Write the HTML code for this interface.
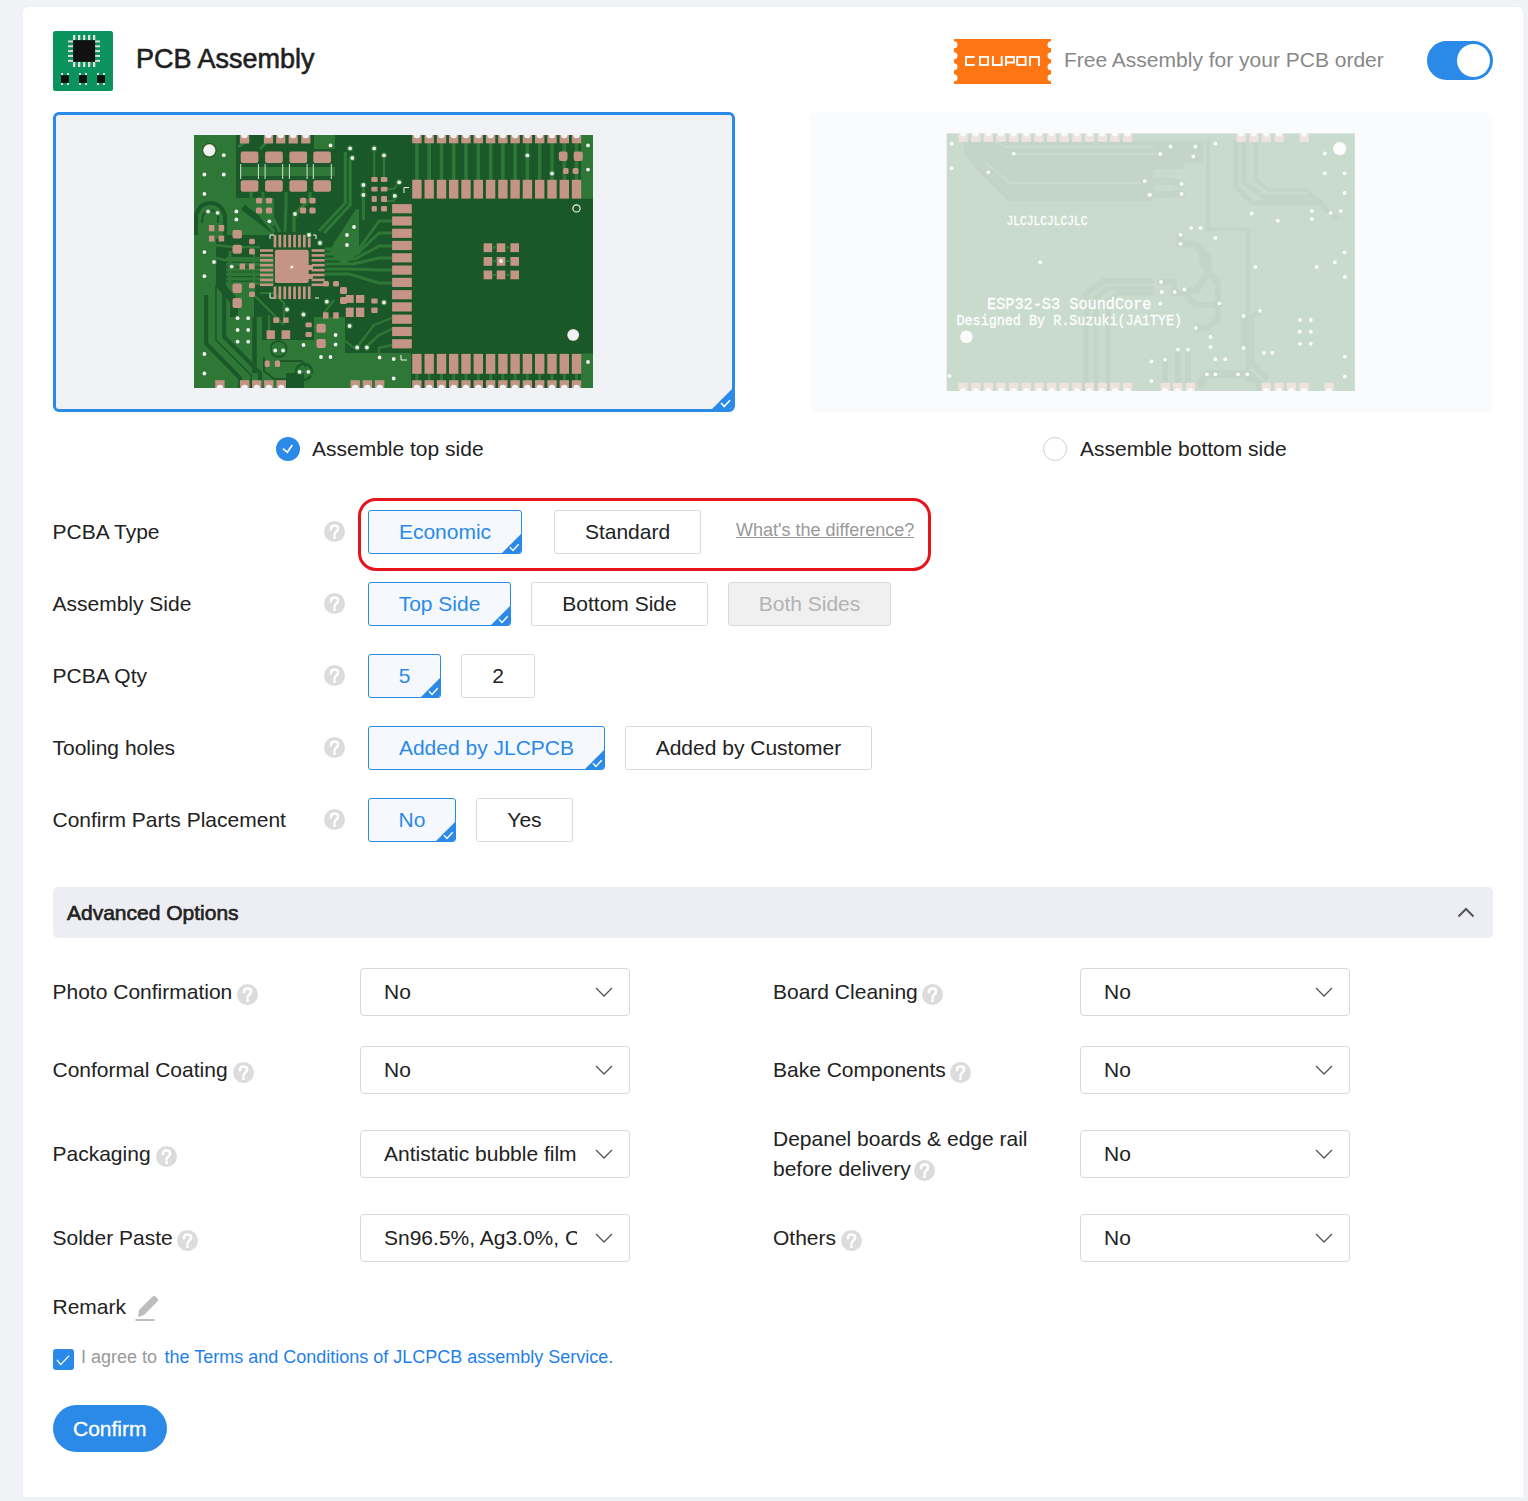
<!DOCTYPE html>
<html><head><meta charset="utf-8">
<style>
html,body{margin:0;padding:0}
body{width:1528px;height:1501px;overflow:hidden;background:#f0f2f5;position:relative;font-family:"Liberation Sans",sans-serif;color:#222}
.card{position:absolute;left:23px;top:7px;width:1500px;height:1490px;background:#fff;border-radius:6px 6px 0 0}
.a{position:absolute}
.t{position:absolute;white-space:nowrap;line-height:normal;font-size:21px}
.btn{position:absolute;box-sizing:border-box;border:1px solid #d9d9d9;border-radius:3px;background:#fff;font-size:21px;color:#222;text-align:center;white-space:nowrap;overflow:hidden}
.btn span{position:absolute;left:0;right:0;top:9px;line-height:normal}
.sel{border-color:#2b8ae8;background:#f5f9fe;color:#2b8ae8}
.sel svg{position:absolute;right:-1px;bottom:-1px}
.dis{background:#f0f0f0;color:#b3b3b3;border-color:#dadada}
.q{position:absolute;width:21px;height:21px}.q svg{display:block}
.sl{position:absolute;box-sizing:border-box;width:270px;height:48px;border:1px solid #d9d9d9;border-radius:4px;background:#fff;overflow:hidden}
.sl span{position:absolute;left:23px;top:11px;font-size:21px;line-height:normal;white-space:nowrap;width:193px;overflow:hidden}
.sl svg{position:absolute;left:234px;top:18px}
</style></head><body>
<div class="card"></div>

<!-- header -->
<svg class="a" style="left:53px;top:31px" width="60" height="60" viewBox="0 0 60 60">
 <rect x="0" y="0" width="60" height="60" rx="2.5" fill="#0a935c"/>
 <g fill="#e2dede">
  <rect x="20" y="4" width="2.3" height="5"/><rect x="25" y="4" width="2.3" height="5"/><rect x="30" y="4" width="2.3" height="5"/><rect x="35" y="4" width="2.3" height="5"/><rect x="40" y="4" width="2.3" height="5"/>
  <rect x="20" y="31" width="2.3" height="5"/><rect x="25" y="31" width="2.3" height="5"/><rect x="30" y="31" width="2.3" height="5"/><rect x="35" y="31" width="2.3" height="5"/><rect x="40" y="31" width="2.3" height="5"/>
  <rect x="15" y="9.5" width="5" height="1.9"/><rect x="15" y="14.3" width="5" height="1.9"/><rect x="15" y="19.1" width="5" height="1.9"/><rect x="15" y="24" width="5" height="1.9"/><rect x="15" y="28.9" width="5" height="1.9"/>
  <rect x="42" y="9.5" width="5" height="1.9"/><rect x="42" y="14.3" width="5" height="1.9"/><rect x="42" y="19.1" width="5" height="1.9"/><rect x="42" y="24" width="5" height="1.9"/><rect x="42" y="28.9" width="5" height="1.9"/>
  <rect x="8" y="42" width="2" height="2"/><rect x="14" y="42" width="2" height="2"/><rect x="8" y="52" width="2" height="2"/><rect x="14" y="52" width="2" height="2"/>
  <rect x="26" y="42" width="2" height="2"/><rect x="32" y="42" width="2" height="2"/><rect x="26" y="52" width="2" height="2"/><rect x="32" y="52" width="2" height="2"/>
  <rect x="44" y="42" width="2" height="2"/><rect x="50" y="42" width="2" height="2"/><rect x="44" y="52" width="2" height="2"/><rect x="50" y="52" width="2" height="2"/>
 </g>
 <rect x="20.2" y="9.2" width="21.9" height="21.6" fill="#111"/>
 <rect x="8" y="44.2" width="7.8" height="7.7" fill="#111"/>
 <rect x="26.1" y="44.2" width="7.8" height="7.7" fill="#111"/>
 <rect x="44.2" y="44.2" width="7.8" height="7.7" fill="#111"/>
</svg>
<div class="t" style="left:136px;top:44px;font-size:27px;color:#1f1f1f;-webkit-text-stroke:0.6px #1f1f1f">PCB Assembly</div>

<!-- coupon -->
<svg class="a" style="left:954px;top:39px" width="97" height="45" viewBox="0 0 97 45">
 <path fill="#ff7513" d="M0 0H97V2.2A3.5 3.5 0 0 0 97 9.2V13.2A3.5 3.5 0 0 0 97 20.2V24.2A3.5 3.5 0 0 0 97 31.2V35.2A3.5 3.5 0 0 0 97 42.2V45H0V42.2A3.5 3.5 0 0 0 0 35.2V31.2A3.5 3.5 0 0 0 0 24.2V20.2A3.5 3.5 0 0 0 0 13.2V9.2A3.5 3.5 0 0 0 0 2.2Z"/>
 <g fill="none" stroke="#fff" stroke-width="1.9">
  <path d="M20.7 18H12V26H20.7"/>
  <rect x="25.9" y="18" width="8.2" height="8"/>
  <path d="M38.9 17V26H47.7V17"/>
  <path d="M52 27V18H60V23.5H52"/>
  <rect x="63.2" y="18" width="8.4" height="8"/>
  <path d="M76 27V18H84.9V27"/>
 </g>
</svg>
<div class="t" style="left:1064px;top:48px;color:#888">Free Assembly for your PCB order</div>
<div class="a" style="left:1427px;top:41px;width:66px;height:39px;border-radius:20px;background:#2b8ae8"></div>
<div class="a" style="left:1457px;top:44px;width:33px;height:33px;border-radius:50%;background:#fff"></div>

<!-- image boxes -->
<div class="a" style="left:53px;top:112px;width:682px;height:300px;box-sizing:border-box;border:3px solid #2b8ae8;border-radius:6px;background:#f0f2f5;overflow:hidden">
 <svg class="a" style="right:-3px;bottom:-3px" width="26" height="26"><polygon points="26,0 26,26 0,26" fill="#2b8ae8"/><polyline points="12.1,16.9 15.2,20.6 21,14.3" fill="none" stroke="#fff" stroke-width="1.6"/></svg>
</div>
<div class="a" id="pcbtop" style="left:194px;top:135px;width:399px;height:253px"><svg width="399" height="253" viewBox="0 0 399 253"><rect x="0.0" y="0.0" width="399.0" height="253.0" fill="#2f7736"/><rect x="217.0" y="0.0" width="170.0" height="253.0" fill="#1a5829"/><rect x="387.0" y="63.6" width="12.0" height="155.0" fill="#1a5829"/><rect x="42.0" y="0.0" width="175.0" height="63.0" fill="#1a5829"/><rect x="80.0" y="62.0" width="137.0" height="120.0" fill="#1a5829"/><rect x="60.0" y="150.0" width="20.0" height="32.0" fill="#1a5829"/><rect x="31.0" y="100.0" width="49.0" height="22.0" fill="#1a5829"/><rect x="151.0" y="182.0" width="66.0" height="36.0" fill="#1a5829"/><rect x="68.0" y="182.0" width="52.0" height="23.0" fill="#1a5829"/><rect x="92.0" y="238.0" width="18.0" height="15.0" fill="#1a5829"/><polyline fill="none" stroke="#1a5829" stroke-width="2" stroke-linejoin="round" points="70.0,222.0 70.0,236.0 80.0,244.0 92.0,244.0"/><polyline fill="none" stroke="#1a5829" stroke-width="2" stroke-linejoin="round" points="86.0,226.0 108.0,226.0 112.0,232.0"/><circle cx="84.5" cy="214" r="8" fill="none" stroke="#1a5829" stroke-width="2"/><circle cx="110" cy="236.8" r="8" fill="none" stroke="#1a5829" stroke-width="2.5"/><path d="M2 100 L2 80 Q6 68 16 68 Q24 68 28 74 L31 80 L31 110" fill="none" stroke="#1a5829" stroke-width="4"/><path d="M8 88 Q8 76 16 75 Q22 76 24 80 L24 88" fill="none" stroke="#1a5829" stroke-width="2"/><polyline fill="none" stroke="#1a5829" stroke-width="8" stroke-linejoin="round" points="26.0,104.0 26.0,150.0 40.0,166.0 40.0,182.0"/><polyline fill="none" stroke="#1a5829" stroke-width="6" stroke-linejoin="round" points="49.0,72.0 62.0,82.0 80.0,96.0"/><rect x="31.0" y="122.0" width="35.0" height="28.0" fill="#2f7736"/><polyline fill="none" stroke="#1a5829" stroke-width="1.2" stroke-linejoin="round" points="31.0,127.4 66.0,127.4"/><polyline fill="none" stroke="#1a5829" stroke-width="1.2" stroke-linejoin="round" points="31.0,132.2 66.0,132.2"/><polyline fill="none" stroke="#1a5829" stroke-width="1.2" stroke-linejoin="round" points="31.0,137.0 66.0,137.0"/><polyline fill="none" stroke="#1a5829" stroke-width="1.2" stroke-linejoin="round" points="31.0,141.6 66.0,141.6"/><polyline fill="none" stroke="#1a5829" stroke-width="1.2" stroke-linejoin="round" points="31.0,146.2 66.0,146.2"/><polyline fill="none" stroke="#1a5829" stroke-width="4" stroke-linejoin="round" points="12.2,160.0 12.2,208.7 46.0,243.0 46.0,253.0"/><polyline fill="none" stroke="#1a5829" stroke-width="1.6" stroke-linejoin="round" points="22.0,150.0 22.0,205.0 57.0,240.0 57.0,253.0"/><polyline fill="none" stroke="#1a5829" stroke-width="4" stroke-linejoin="round" points="30.2,110.0 30.2,202.0 66.0,238.0 66.0,253.0"/><polyline fill="none" stroke="#1a5829" stroke-width="4.5" stroke-linejoin="round" points="60.5,182.0 60.5,238.0"/><rect x="120.0" y="0.0" width="21.0" height="14.0" fill="#2f7736"/><rect x="46.0" y="32.0" width="95.0" height="9.0" fill="#2f7736"/><polygon fill="#2f7736" points="162.0,74.0 165.0,74.0 165.0,118.0 150.0,130.0 135.0,118.0 140.0,108.0"/><rect x="387.0" y="0.0" width="12.0" height="63.6" fill="#2f7736"/><rect x="387.0" y="218.5" width="12.0" height="34.5" fill="#2f7736"/><polyline fill="none" stroke="#2f7736" stroke-width="3" stroke-linejoin="round" points="36.0,116.0 36.0,150.0 48.0,165.0 48.0,175.0"/><polyline fill="none" stroke="#2f7736" stroke-width="3.6" stroke-linejoin="round" points="222.9,8.0 222.9,45.0"/><polyline fill="none" stroke="#2f7736" stroke-width="3" stroke-linejoin="round" points="222.9,238.0 222.9,246.0"/><polyline fill="none" stroke="#2f7736" stroke-width="3.6" stroke-linejoin="round" points="235.2,8.0 235.2,45.0"/><polyline fill="none" stroke="#2f7736" stroke-width="3" stroke-linejoin="round" points="235.2,238.0 235.2,246.0"/><polyline fill="none" stroke="#2f7736" stroke-width="3.6" stroke-linejoin="round" points="247.5,8.0 247.5,45.0"/><polyline fill="none" stroke="#2f7736" stroke-width="3" stroke-linejoin="round" points="247.5,238.0 247.5,246.0"/><polyline fill="none" stroke="#2f7736" stroke-width="3.6" stroke-linejoin="round" points="259.7,8.0 259.7,45.0"/><polyline fill="none" stroke="#2f7736" stroke-width="3" stroke-linejoin="round" points="259.7,238.0 259.7,246.0"/><polyline fill="none" stroke="#2f7736" stroke-width="3.6" stroke-linejoin="round" points="272.0,8.0 272.0,45.0"/><polyline fill="none" stroke="#2f7736" stroke-width="3" stroke-linejoin="round" points="272.0,238.0 272.0,246.0"/><polyline fill="none" stroke="#2f7736" stroke-width="3.6" stroke-linejoin="round" points="284.3,8.0 284.3,45.0"/><polyline fill="none" stroke="#2f7736" stroke-width="3" stroke-linejoin="round" points="284.3,238.0 284.3,246.0"/><polyline fill="none" stroke="#2f7736" stroke-width="3.6" stroke-linejoin="round" points="296.6,8.0 296.6,45.0"/><polyline fill="none" stroke="#2f7736" stroke-width="3" stroke-linejoin="round" points="296.6,238.0 296.6,246.0"/><polyline fill="none" stroke="#2f7736" stroke-width="3.6" stroke-linejoin="round" points="308.9,8.0 308.9,45.0"/><polyline fill="none" stroke="#2f7736" stroke-width="3" stroke-linejoin="round" points="308.9,238.0 308.9,246.0"/><polyline fill="none" stroke="#2f7736" stroke-width="3.6" stroke-linejoin="round" points="321.1,8.0 321.1,45.0"/><polyline fill="none" stroke="#2f7736" stroke-width="3" stroke-linejoin="round" points="321.1,238.0 321.1,246.0"/><polyline fill="none" stroke="#2f7736" stroke-width="3.6" stroke-linejoin="round" points="333.4,8.0 333.4,45.0"/><polyline fill="none" stroke="#2f7736" stroke-width="3" stroke-linejoin="round" points="333.4,238.0 333.4,246.0"/><polyline fill="none" stroke="#2f7736" stroke-width="3.6" stroke-linejoin="round" points="345.7,8.0 345.7,45.0"/><polyline fill="none" stroke="#2f7736" stroke-width="3" stroke-linejoin="round" points="345.7,238.0 345.7,246.0"/><polyline fill="none" stroke="#2f7736" stroke-width="3.6" stroke-linejoin="round" points="358.0,8.0 358.0,45.0"/><polyline fill="none" stroke="#2f7736" stroke-width="3" stroke-linejoin="round" points="358.0,238.0 358.0,246.0"/><polyline fill="none" stroke="#2f7736" stroke-width="3.6" stroke-linejoin="round" points="370.3,8.0 370.3,45.0"/><polyline fill="none" stroke="#2f7736" stroke-width="3" stroke-linejoin="round" points="370.3,238.0 370.3,246.0"/><polyline fill="none" stroke="#2f7736" stroke-width="3.6" stroke-linejoin="round" points="382.5,8.0 382.5,45.0"/><polyline fill="none" stroke="#2f7736" stroke-width="3" stroke-linejoin="round" points="382.5,238.0 382.5,246.0"/><polyline fill="none" stroke="#2f7736" stroke-width="3.2" stroke-linejoin="round" points="151.4,17.0 151.4,68.0 125.0,96.0"/><polyline fill="none" stroke="#2f7736" stroke-width="3.2" stroke-linejoin="round" points="156.1,23.0 156.1,70.0 130.0,98.0"/><polyline fill="none" stroke="#2f7736" stroke-width="2.2" stroke-linejoin="round" points="180.2,13.0 180.2,42.0"/><polyline fill="none" stroke="#2f7736" stroke-width="3.5" stroke-linejoin="round" points="57.0,57.0 57.0,68.0 80.0,97.0"/><polyline fill="none" stroke="#2f7736" stroke-width="3" stroke-linejoin="round" points="69.0,57.0 69.0,64.0 86.0,97.0"/><polyline fill="none" stroke="#2f7736" stroke-width="3" stroke-linejoin="round" points="92.0,57.0 92.0,70.0 91.0,97.0"/><polyline fill="none" stroke="#2f7736" stroke-width="3.5" stroke-linejoin="round" points="116.0,57.0 116.0,64.0 100.0,80.0 100.0,97.0"/><polyline fill="none" stroke="#2f7736" stroke-width="3" stroke-linejoin="round" points="44.0,12.0 56.0,4.0"/><polyline fill="none" stroke="#2f7736" stroke-width="3" stroke-linejoin="round" points="66.0,14.0 76.0,4.0"/><polyline fill="none" stroke="#2f7736" stroke-width="2.2" stroke-linejoin="round" points="190.0,20.4 190.0,42.0"/><polyline fill="none" stroke="#2f7736" stroke-width="3" stroke-linejoin="round" points="169.4,50.0 169.4,85.0"/><polyline fill="none" stroke="#2f7736" stroke-width="2" stroke-linejoin="round" points="193.0,54.0 200.0,54.0 205.0,47.0"/><polyline fill="none" stroke="#2f7736" stroke-width="2" stroke-linejoin="round" points="193.0,66.0 200.0,66.0 201.0,61.0"/><polyline fill="none" stroke="#2f7736" stroke-width="3.0" stroke-linejoin="round" points="131.0,114.0 165.0,114.0 185.0,86.0 198.0,86.0"/><polyline fill="none" stroke="#2f7736" stroke-width="3.0" stroke-linejoin="round" points="131.0,119.0 163.0,119.0 185.0,98.0 198.0,98.0"/><polyline fill="none" stroke="#2f7736" stroke-width="3.0" stroke-linejoin="round" points="131.0,124.0 161.0,124.0 185.0,111.0 198.0,111.0"/><polyline fill="none" stroke="#2f7736" stroke-width="3.0" stroke-linejoin="round" points="131.0,129.0 159.0,129.0 185.0,123.0 198.0,123.0"/><polyline fill="none" stroke="#2f7736" stroke-width="3.0" stroke-linejoin="round" points="131.0,134.0 157.0,134.0 185.0,135.0 198.0,135.0"/><polyline fill="none" stroke="#2f7736" stroke-width="3.0" stroke-linejoin="round" points="131.0,139.0 155.0,139.0 185.0,148.0 198.0,148.0"/><polyline fill="none" stroke="#2f7736" stroke-width="2.4" stroke-linejoin="round" points="60.0,118.0 60.0,160.0 90.0,190.0"/><polyline fill="none" stroke="#2f7736" stroke-width="2.2" stroke-linejoin="round" points="66.0,158.0 80.0,158.0 90.0,168.0 90.0,182.0"/><polyline fill="none" stroke="#2f7736" stroke-width="2.4" stroke-linejoin="round" points="75.0,180.0 75.0,225.0"/><polyline fill="none" stroke="#2f7736" stroke-width="2.2" stroke-linejoin="round" points="140.0,165.0 130.0,178.0 130.0,236.0 115.0,240.0"/><polyline fill="none" stroke="#2f7736" stroke-width="2.2" stroke-linejoin="round" points="150.0,182.0 150.0,205.0 160.0,213.0"/><polyline fill="none" stroke="#2f7736" stroke-width="2.4" stroke-linejoin="round" points="172.0,212.0 185.0,200.0 198.0,194.0"/><polyline fill="none" stroke="#2f7736" stroke-width="2.4" stroke-linejoin="round" points="163.0,212.0 180.0,190.0 198.0,183.0"/><polyline fill="none" stroke="#2f7736" stroke-width="2.4" stroke-linejoin="round" points="185.0,222.0 185.0,213.0 198.0,210.0"/><polyline fill="none" stroke="#2f7736" stroke-width="2.4" stroke-linejoin="round" points="4.0,90.0 20.0,110.0 40.0,112.0 66.0,112.0"/><polyline fill="none" stroke="#2f7736" stroke-width="2.4" stroke-linejoin="round" points="4.0,118.0 30.0,125.0 66.0,123.0"/><rect x="218.2" y="0.0" width="9.4" height="8.3" fill="#c49486"/><rect x="218.2" y="245.2" width="9.4" height="8.3" fill="#c49486"/><rect x="218.2" y="44.8" width="9.4" height="18.8" fill="#c49486"/><rect x="218.2" y="218.9" width="9.4" height="19.9" fill="#c49486"/><rect x="230.5" y="0.0" width="9.4" height="8.3" fill="#c49486"/><rect x="230.5" y="245.2" width="9.4" height="8.3" fill="#c49486"/><rect x="230.5" y="44.8" width="9.4" height="18.8" fill="#c49486"/><rect x="230.5" y="218.9" width="9.4" height="19.9" fill="#c49486"/><rect x="242.8" y="0.0" width="9.4" height="8.3" fill="#c49486"/><rect x="242.8" y="245.2" width="9.4" height="8.3" fill="#c49486"/><rect x="242.8" y="44.8" width="9.4" height="18.8" fill="#c49486"/><rect x="242.8" y="218.9" width="9.4" height="19.9" fill="#c49486"/><rect x="255.0" y="0.0" width="9.4" height="8.3" fill="#c49486"/><rect x="255.0" y="245.2" width="9.4" height="8.3" fill="#c49486"/><rect x="255.0" y="44.8" width="9.4" height="18.8" fill="#c49486"/><rect x="255.0" y="218.9" width="9.4" height="19.9" fill="#c49486"/><rect x="267.3" y="0.0" width="9.4" height="8.3" fill="#c49486"/><rect x="267.3" y="245.2" width="9.4" height="8.3" fill="#c49486"/><rect x="267.3" y="44.8" width="9.4" height="18.8" fill="#c49486"/><rect x="267.3" y="218.9" width="9.4" height="19.9" fill="#c49486"/><rect x="279.6" y="0.0" width="9.4" height="8.3" fill="#c49486"/><rect x="279.6" y="245.2" width="9.4" height="8.3" fill="#c49486"/><rect x="279.6" y="44.8" width="9.4" height="18.8" fill="#c49486"/><rect x="279.6" y="218.9" width="9.4" height="19.9" fill="#c49486"/><rect x="291.9" y="0.0" width="9.4" height="8.3" fill="#c49486"/><rect x="291.9" y="245.2" width="9.4" height="8.3" fill="#c49486"/><rect x="291.9" y="44.8" width="9.4" height="18.8" fill="#c49486"/><rect x="291.9" y="218.9" width="9.4" height="19.9" fill="#c49486"/><rect x="304.2" y="0.0" width="9.4" height="8.3" fill="#c49486"/><rect x="304.2" y="245.2" width="9.4" height="8.3" fill="#c49486"/><rect x="304.2" y="44.8" width="9.4" height="18.8" fill="#c49486"/><rect x="304.2" y="218.9" width="9.4" height="19.9" fill="#c49486"/><rect x="316.4" y="0.0" width="9.4" height="8.3" fill="#c49486"/><rect x="316.4" y="245.2" width="9.4" height="8.3" fill="#c49486"/><rect x="316.4" y="44.8" width="9.4" height="18.8" fill="#c49486"/><rect x="316.4" y="218.9" width="9.4" height="19.9" fill="#c49486"/><rect x="328.7" y="0.0" width="9.4" height="8.3" fill="#c49486"/><rect x="328.7" y="245.2" width="9.4" height="8.3" fill="#c49486"/><rect x="328.7" y="44.8" width="9.4" height="18.8" fill="#c49486"/><rect x="328.7" y="218.9" width="9.4" height="19.9" fill="#c49486"/><rect x="341.0" y="0.0" width="9.4" height="8.3" fill="#c49486"/><rect x="341.0" y="245.2" width="9.4" height="8.3" fill="#c49486"/><rect x="341.0" y="44.8" width="9.4" height="18.8" fill="#c49486"/><rect x="341.0" y="218.9" width="9.4" height="19.9" fill="#c49486"/><rect x="353.3" y="0.0" width="9.4" height="8.3" fill="#c49486"/><rect x="353.3" y="245.2" width="9.4" height="8.3" fill="#c49486"/><rect x="353.3" y="44.8" width="9.4" height="18.8" fill="#c49486"/><rect x="353.3" y="218.9" width="9.4" height="19.9" fill="#c49486"/><rect x="365.6" y="0.0" width="9.4" height="8.3" fill="#c49486"/><rect x="365.6" y="245.2" width="9.4" height="8.3" fill="#c49486"/><rect x="365.6" y="44.8" width="9.4" height="18.8" fill="#c49486"/><rect x="365.6" y="218.9" width="9.4" height="19.9" fill="#c49486"/><rect x="377.8" y="0.0" width="9.4" height="8.3" fill="#c49486"/><rect x="377.8" y="245.2" width="9.4" height="8.3" fill="#c49486"/><rect x="377.8" y="44.8" width="9.4" height="18.8" fill="#c49486"/><rect x="377.8" y="218.9" width="9.4" height="19.9" fill="#c49486"/><rect x="45.9" y="0.0" width="9.2" height="8.5" fill="#c49486"/><rect x="69.9" y="0.0" width="9.2" height="8.5" fill="#c49486"/><rect x="82.1" y="0.0" width="9.2" height="8.5" fill="#c49486"/><rect x="94.6" y="0.0" width="9.2" height="8.5" fill="#c49486"/><rect x="107.2" y="0.0" width="9.2" height="8.5" fill="#c49486"/><rect x="21.2" y="245.2" width="9.4" height="8.3" fill="#c49486"/><rect x="45.9" y="245.2" width="9.4" height="8.3" fill="#c49486"/><rect x="58.1" y="245.2" width="9.4" height="8.3" fill="#c49486"/><rect x="70.1" y="245.2" width="9.4" height="8.3" fill="#c49486"/><rect x="82.5" y="245.2" width="9.4" height="8.3" fill="#c49486"/><rect x="156.5" y="245.2" width="9.4" height="8.3" fill="#c49486"/><rect x="168.7" y="245.2" width="9.4" height="8.3" fill="#c49486"/><rect x="180.9" y="245.2" width="9.4" height="8.3" fill="#c49486"/><circle cx="222.9" cy="0.0" r="3.2" fill="#f0f2f5"/><circle cx="222.9" cy="253.0" r="3.2" fill="#f0f2f5"/><circle cx="235.2" cy="0.0" r="3.2" fill="#f0f2f5"/><circle cx="235.2" cy="253.0" r="3.2" fill="#f0f2f5"/><circle cx="247.5" cy="0.0" r="3.2" fill="#f0f2f5"/><circle cx="247.5" cy="253.0" r="3.2" fill="#f0f2f5"/><circle cx="259.7" cy="0.0" r="3.2" fill="#f0f2f5"/><circle cx="259.7" cy="253.0" r="3.2" fill="#f0f2f5"/><circle cx="272.0" cy="0.0" r="3.2" fill="#f0f2f5"/><circle cx="272.0" cy="253.0" r="3.2" fill="#f0f2f5"/><circle cx="284.3" cy="0.0" r="3.2" fill="#f0f2f5"/><circle cx="284.3" cy="253.0" r="3.2" fill="#f0f2f5"/><circle cx="296.6" cy="0.0" r="3.2" fill="#f0f2f5"/><circle cx="296.6" cy="253.0" r="3.2" fill="#f0f2f5"/><circle cx="308.9" cy="0.0" r="3.2" fill="#f0f2f5"/><circle cx="308.9" cy="253.0" r="3.2" fill="#f0f2f5"/><circle cx="321.1" cy="0.0" r="3.2" fill="#f0f2f5"/><circle cx="321.1" cy="253.0" r="3.2" fill="#f0f2f5"/><circle cx="333.4" cy="0.0" r="3.2" fill="#f0f2f5"/><circle cx="333.4" cy="253.0" r="3.2" fill="#f0f2f5"/><circle cx="345.7" cy="0.0" r="3.2" fill="#f0f2f5"/><circle cx="345.7" cy="253.0" r="3.2" fill="#f0f2f5"/><circle cx="358.0" cy="0.0" r="3.2" fill="#f0f2f5"/><circle cx="358.0" cy="253.0" r="3.2" fill="#f0f2f5"/><circle cx="370.3" cy="0.0" r="3.2" fill="#f0f2f5"/><circle cx="370.3" cy="253.0" r="3.2" fill="#f0f2f5"/><circle cx="382.5" cy="0.0" r="3.2" fill="#f0f2f5"/><circle cx="382.5" cy="253.0" r="3.2" fill="#f0f2f5"/><circle cx="50.5" cy="0.0" r="3.2" fill="#f0f2f5"/><circle cx="74.5" cy="0.0" r="3.2" fill="#f0f2f5"/><circle cx="86.7" cy="0.0" r="3.2" fill="#f0f2f5"/><circle cx="99.2" cy="0.0" r="3.2" fill="#f0f2f5"/><circle cx="111.8" cy="0.0" r="3.2" fill="#f0f2f5"/><circle cx="25.9" cy="253.0" r="3.2" fill="#f0f2f5"/><circle cx="50.6" cy="253.0" r="3.2" fill="#f0f2f5"/><circle cx="62.8" cy="253.0" r="3.2" fill="#f0f2f5"/><circle cx="74.8" cy="253.0" r="3.2" fill="#f0f2f5"/><circle cx="87.2" cy="253.0" r="3.2" fill="#f0f2f5"/><circle cx="161.2" cy="253.0" r="3.2" fill="#f0f2f5"/><circle cx="173.4" cy="253.0" r="3.2" fill="#f0f2f5"/><circle cx="185.6" cy="253.0" r="3.2" fill="#f0f2f5"/><rect x="198.1" y="69.1" width="19.7" height="9.2" fill="#c49486"/><rect x="198.1" y="81.4" width="19.7" height="9.2" fill="#c49486"/><rect x="198.1" y="93.7" width="19.7" height="9.2" fill="#c49486"/><rect x="198.1" y="105.9" width="19.7" height="9.2" fill="#c49486"/><rect x="198.1" y="118.2" width="19.7" height="9.2" fill="#c49486"/><rect x="198.1" y="130.5" width="19.7" height="9.2" fill="#c49486"/><rect x="198.1" y="142.8" width="19.7" height="9.2" fill="#c49486"/><rect x="198.1" y="155.1" width="19.7" height="9.2" fill="#c49486"/><rect x="198.1" y="167.3" width="19.7" height="9.2" fill="#c49486"/><rect x="198.1" y="179.6" width="19.7" height="9.2" fill="#c49486"/><rect x="198.1" y="191.9" width="19.7" height="9.2" fill="#c49486"/><rect x="198.1" y="204.2" width="19.7" height="9.2" fill="#c49486"/><rect x="289.6" y="108.3" width="8.6" height="8.8" fill="#c49486"/><rect x="289.6" y="122.0" width="8.6" height="8.8" fill="#c49486"/><rect x="289.6" y="135.5" width="8.6" height="8.8" fill="#c49486"/><rect x="302.7" y="108.3" width="8.6" height="8.8" fill="#c49486"/><rect x="302.7" y="122.0" width="8.6" height="8.8" fill="#c49486"/><rect x="302.7" y="135.5" width="8.6" height="8.8" fill="#c49486"/><rect x="316.4" y="108.3" width="8.6" height="8.8" fill="#c49486"/><rect x="316.4" y="122.0" width="8.6" height="8.8" fill="#c49486"/><rect x="316.4" y="135.5" width="8.6" height="8.8" fill="#c49486"/><polyline fill="none" stroke="#2f7736" stroke-width="2" stroke-linejoin="round" points="298.0,112.5 302.7,112.5"/><polyline fill="none" stroke="#2f7736" stroke-width="2" stroke-linejoin="round" points="311.6,112.5 316.4,112.5"/><polyline fill="none" stroke="#2f7736" stroke-width="2" stroke-linejoin="round" points="298.0,126.0 302.7,126.0"/><polyline fill="none" stroke="#2f7736" stroke-width="2" stroke-linejoin="round" points="311.6,126.0 316.4,126.0"/><polyline fill="none" stroke="#2f7736" stroke-width="2" stroke-linejoin="round" points="298.0,140.0 302.7,140.0"/><polyline fill="none" stroke="#2f7736" stroke-width="2" stroke-linejoin="round" points="311.6,140.0 316.4,140.0"/><circle cx="307.0" cy="126.0" r="1.9" fill="#f2f2f2"/><rect x="364.8" y="16.5" width="8.7" height="9.4" fill="#c49486" rx="2"/><rect x="379.7" y="16.5" width="9.1" height="9.4" fill="#c49486" rx="2"/><rect x="369.1" y="33.0" width="5.5" height="5.9" fill="#c49486" rx="1.5"/><rect x="378.6" y="33.0" width="5.9" height="5.9" fill="#c49486" rx="1.5"/><rect x="46.7" y="16.5" width="17.7" height="11.4" fill="#c49486" rx="2"/><rect x="46.7" y="45.2" width="17.7" height="11.5" fill="#c49486" rx="2"/><rect x="71.1" y="16.5" width="17.7" height="11.4" fill="#c49486" rx="2"/><rect x="71.1" y="45.2" width="17.7" height="11.5" fill="#c49486" rx="2"/><rect x="95.4" y="16.5" width="17.7" height="11.4" fill="#c49486" rx="2"/><rect x="95.4" y="45.2" width="17.7" height="11.5" fill="#c49486" rx="2"/><rect x="119.3" y="16.5" width="17.7" height="11.4" fill="#c49486" rx="2"/><rect x="119.3" y="45.2" width="17.7" height="11.5" fill="#c49486" rx="2"/><polyline fill="none" stroke="#e8efe8" stroke-width="0.9" stroke-linejoin="round" points="46.7,29.0 46.7,44.0"/><polyline fill="none" stroke="#e8efe8" stroke-width="0.9" stroke-linejoin="round" points="64.4,29.0 64.4,44.0"/><polyline fill="none" stroke="#e8efe8" stroke-width="0.9" stroke-linejoin="round" points="71.1,29.0 71.1,44.0"/><polyline fill="none" stroke="#e8efe8" stroke-width="0.9" stroke-linejoin="round" points="88.7,29.0 88.7,44.0"/><polyline fill="none" stroke="#e8efe8" stroke-width="0.9" stroke-linejoin="round" points="95.4,29.0 95.4,44.0"/><polyline fill="none" stroke="#e8efe8" stroke-width="0.9" stroke-linejoin="round" points="113.1,29.0 113.1,44.0"/><polyline fill="none" stroke="#e8efe8" stroke-width="0.9" stroke-linejoin="round" points="119.3,29.0 119.3,44.0"/><polyline fill="none" stroke="#e8efe8" stroke-width="0.9" stroke-linejoin="round" points="137.3,29.0 137.3,44.0"/><rect x="62.0" y="62.8" width="6.2" height="5.6" fill="#c49486" rx="1.5"/><rect x="62.0" y="72.6" width="6.2" height="5.9" fill="#c49486" rx="1.5"/><rect x="71.9" y="62.8" width="6.2" height="5.6" fill="#c49486" rx="1.5"/><rect x="71.9" y="72.6" width="6.2" height="5.9" fill="#c49486" rx="1.5"/><rect x="106.0" y="62.8" width="6.2" height="5.6" fill="#c49486" rx="1.5"/><rect x="106.0" y="72.6" width="6.2" height="5.9" fill="#c49486" rx="1.5"/><rect x="115.4" y="62.8" width="6.2" height="5.6" fill="#c49486" rx="1.5"/><rect x="115.4" y="72.6" width="6.2" height="5.9" fill="#c49486" rx="1.5"/><rect x="14.9" y="90.0" width="5.5" height="6.3" fill="#c49486"/><rect x="24.7" y="90.0" width="5.5" height="6.3" fill="#c49486"/><rect x="14.9" y="100.6" width="5.5" height="5.9" fill="#c49486"/><rect x="24.7" y="100.6" width="5.5" height="5.9" fill="#c49486"/><rect x="38.5" y="95.1" width="9.4" height="8.3" fill="#c49486" rx="2"/><rect x="38.5" y="109.7" width="9.4" height="9.0" fill="#c49486" rx="2"/><rect x="55.0" y="103.8" width="5.9" height="5.5" fill="#c49486" rx="1.5"/><rect x="55.0" y="113.6" width="5.9" height="5.9" fill="#c49486" rx="1.5"/><rect x="45.6" y="128.5" width="5.4" height="5.9" fill="#c49486"/><rect x="55.0" y="128.5" width="5.5" height="5.9" fill="#c49486"/><rect x="38.5" y="148.5" width="9.4" height="9.5" fill="#c49486" rx="2"/><rect x="38.5" y="163.0" width="9.4" height="10.0" fill="#c49486" rx="2"/><rect x="55.0" y="147.7" width="5.9" height="5.5" fill="#c49486" rx="1.5"/><rect x="55.0" y="156.4" width="5.9" height="5.5" fill="#c49486" rx="1.5"/><rect x="177.3" y="42.0" width="6.3" height="5.1" fill="#c49486" rx="1"/><rect x="186.8" y="42.0" width="6.6" height="5.1" fill="#c49486" rx="1"/><rect x="177.3" y="51.8" width="6.3" height="4.7" fill="#c49486" rx="1"/><rect x="186.8" y="51.8" width="6.6" height="4.7" fill="#c49486" rx="1"/><rect x="177.7" y="60.9" width="5.1" height="6.2" fill="#c49486" rx="1"/><rect x="187.1" y="60.9" width="5.9" height="6.2" fill="#c49486" rx="1"/><rect x="177.7" y="71.1" width="5.1" height="5.5" fill="#c49486" rx="1"/><rect x="187.1" y="71.1" width="5.9" height="5.5" fill="#c49486" rx="1"/><rect x="151.8" y="160.0" width="7.9" height="7.9" fill="#c49486"/><rect x="162.0" y="160.0" width="8.3" height="7.9" fill="#c49486"/><rect x="151.8" y="172.6" width="7.9" height="9.4" fill="#c49486"/><rect x="162.0" y="172.6" width="8.3" height="9.4" fill="#c49486"/><rect x="177.3" y="163.5" width="6.3" height="5.1" fill="#c49486" rx="1"/><rect x="177.3" y="172.6" width="6.3" height="5.4" fill="#c49486" rx="1"/><rect x="129.0" y="177.3" width="5.5" height="6.3" fill="#c49486"/><rect x="139.2" y="177.3" width="5.5" height="6.3" fill="#c49486"/><rect x="122.4" y="188.7" width="9.4" height="9.0" fill="#c49486" rx="2"/><rect x="122.4" y="204.0" width="9.4" height="9.0" fill="#c49486" rx="2"/><rect x="79.3" y="182.4" width="5.9" height="5.5" fill="#c49486"/><rect x="89.1" y="182.4" width="5.5" height="5.5" fill="#c49486"/><rect x="72.6" y="195.3" width="8.3" height="8.7" fill="#c49486"/><rect x="87.6" y="195.3" width="8.6" height="8.7" fill="#c49486"/><rect x="70.7" y="225.6" width="5.1" height="6.3" fill="#c49486" rx="1.5"/><rect x="80.9" y="225.6" width="5.1" height="6.3" fill="#c49486" rx="1.5"/><rect x="111.5" y="187.5" width="6.3" height="4.7" fill="#c49486" rx="1"/><rect x="111.5" y="196.9" width="6.3" height="5.1" fill="#c49486" rx="1"/><rect x="129.0" y="146.0" width="6.0" height="5.5" fill="#c49486" rx="1.5"/><rect x="139.0" y="146.0" width="6.0" height="5.5" fill="#c49486" rx="1.5"/><rect x="146.0" y="152.0" width="7.0" height="7.0" fill="#c49486" rx="1.5"/><rect x="146.0" y="162.0" width="7.0" height="7.0" fill="#c49486" rx="1.5"/><rect x="113.0" y="130.0" width="6.0" height="5.0" fill="#c49486" rx="1.5"/><rect x="113.0" y="139.0" width="6.0" height="5.0" fill="#c49486" rx="1.5"/><rect x="80.9" y="114.8" width="33.8" height="33.3" fill="#c49486" rx="2"/><rect x="79.6" y="99.8" width="2.7" height="12.6" fill="#c49486"/><rect x="79.6" y="151.5" width="2.7" height="12.6" fill="#c49486"/><rect x="66.0" y="114.2" width="13.0" height="2.6" fill="#c49486"/><rect x="117.6" y="114.2" width="13.0" height="2.6" fill="#c49486"/><rect x="84.5" y="99.8" width="2.7" height="12.6" fill="#c49486"/><rect x="84.5" y="151.5" width="2.7" height="12.6" fill="#c49486"/><rect x="66.0" y="119.1" width="13.0" height="2.6" fill="#c49486"/><rect x="117.6" y="119.1" width="13.0" height="2.6" fill="#c49486"/><rect x="89.4" y="99.8" width="2.7" height="12.6" fill="#c49486"/><rect x="89.4" y="151.5" width="2.7" height="12.6" fill="#c49486"/><rect x="66.0" y="124.0" width="13.0" height="2.6" fill="#c49486"/><rect x="117.6" y="124.0" width="13.0" height="2.6" fill="#c49486"/><rect x="94.3" y="99.8" width="2.7" height="12.6" fill="#c49486"/><rect x="94.3" y="151.5" width="2.7" height="12.6" fill="#c49486"/><rect x="66.0" y="128.9" width="13.0" height="2.6" fill="#c49486"/><rect x="117.6" y="128.9" width="13.0" height="2.6" fill="#c49486"/><rect x="99.2" y="99.8" width="2.7" height="12.6" fill="#c49486"/><rect x="99.2" y="151.5" width="2.7" height="12.6" fill="#c49486"/><rect x="66.0" y="133.8" width="13.0" height="2.6" fill="#c49486"/><rect x="117.6" y="133.8" width="13.0" height="2.6" fill="#c49486"/><rect x="104.1" y="99.8" width="2.7" height="12.6" fill="#c49486"/><rect x="104.1" y="151.5" width="2.7" height="12.6" fill="#c49486"/><rect x="66.0" y="138.7" width="13.0" height="2.6" fill="#c49486"/><rect x="117.6" y="138.7" width="13.0" height="2.6" fill="#c49486"/><rect x="109.0" y="99.8" width="2.7" height="12.6" fill="#c49486"/><rect x="109.0" y="151.5" width="2.7" height="12.6" fill="#c49486"/><rect x="66.0" y="143.6" width="13.0" height="2.6" fill="#c49486"/><rect x="117.6" y="143.6" width="13.0" height="2.6" fill="#c49486"/><rect x="113.9" y="99.8" width="2.7" height="12.6" fill="#c49486"/><rect x="113.9" y="151.5" width="2.7" height="12.6" fill="#c49486"/><rect x="66.0" y="148.5" width="13.0" height="2.6" fill="#c49486"/><rect x="117.6" y="148.5" width="13.0" height="2.6" fill="#c49486"/><circle cx="97.8" cy="132.0" r="1.5" fill="#f2f2f2"/><circle cx="15.3" cy="15.3" r="7.2" fill="#1a5829"/><circle cx="15.3" cy="15.3" r="6.2" fill="#d8c9a0"/><circle cx="15.3" cy="15.3" r="5.6" fill="#f0f2f5"/><circle cx="379.2" cy="199.9" r="6.8" fill="#1a5829"/><circle cx="379.2" cy="199.9" r="6" fill="#d8c9a0"/><circle cx="379.2" cy="199.9" r="5.4" fill="#f0f2f5"/><circle cx="382.5" cy="73.4" r="3.6" fill="none" stroke="#f2f2f2" stroke-width="1.2"/><circle cx="29.8" cy="20.2" r="3.2" fill="#2f7736"/><circle cx="29.8" cy="20.2" r="1.9" fill="#f2f2f2"/><circle cx="10.4" cy="39.5" r="3.2" fill="#2f7736"/><circle cx="10.4" cy="39.5" r="1.9" fill="#f2f2f2"/><circle cx="29.8" cy="39.5" r="3.2" fill="#2f7736"/><circle cx="29.8" cy="39.5" r="1.9" fill="#f2f2f2"/><circle cx="10.4" cy="58.9" r="3.2" fill="#2f7736"/><circle cx="10.4" cy="58.9" r="1.9" fill="#f2f2f2"/><circle cx="14.1" cy="76.5" r="3.2" fill="#2f7736"/><circle cx="14.1" cy="76.5" r="1.9" fill="#f2f2f2"/><circle cx="23.6" cy="77.8" r="3.2" fill="#2f7736"/><circle cx="23.6" cy="77.8" r="1.9" fill="#f2f2f2"/><circle cx="42.4" cy="76.5" r="3.2" fill="#2f7736"/><circle cx="42.4" cy="76.5" r="1.9" fill="#f2f2f2"/><circle cx="42.4" cy="84.5" r="3.2" fill="#2f7736"/><circle cx="42.4" cy="84.5" r="1.9" fill="#f2f2f2"/><circle cx="10.4" cy="117.1" r="3.2" fill="#2f7736"/><circle cx="10.4" cy="117.1" r="1.9" fill="#f2f2f2"/><circle cx="20.0" cy="127.0" r="3.2" fill="#2f7736"/><circle cx="20.0" cy="127.0" r="1.9" fill="#f2f2f2"/><circle cx="37.7" cy="131.6" r="3.2" fill="#2f7736"/><circle cx="37.7" cy="131.6" r="1.9" fill="#f2f2f2"/><circle cx="10.4" cy="141.2" r="3.2" fill="#2f7736"/><circle cx="10.4" cy="141.2" r="1.9" fill="#f2f2f2"/><circle cx="75.4" cy="86.3" r="3.2" fill="#2f7736"/><circle cx="75.4" cy="86.3" r="1.9" fill="#f2f2f2"/><circle cx="101.0" cy="79.0" r="3.2" fill="#2f7736"/><circle cx="101.0" cy="79.0" r="1.9" fill="#f2f2f2"/><circle cx="136.5" cy="10.4" r="3.2" fill="#2f7736"/><circle cx="136.5" cy="10.4" r="1.9" fill="#f2f2f2"/><circle cx="156.1" cy="13.4" r="3.2" fill="#2f7736"/><circle cx="156.1" cy="13.4" r="1.9" fill="#f2f2f2"/><circle cx="158.3" cy="23.0" r="3.2" fill="#2f7736"/><circle cx="158.3" cy="23.0" r="1.9" fill="#f2f2f2"/><circle cx="180.2" cy="13.4" r="3.2" fill="#2f7736"/><circle cx="180.2" cy="13.4" r="1.9" fill="#f2f2f2"/><circle cx="190.0" cy="20.4" r="3.2" fill="#2f7736"/><circle cx="190.0" cy="20.4" r="1.9" fill="#f2f2f2"/><circle cx="169.4" cy="50.0" r="3.2" fill="#2f7736"/><circle cx="169.4" cy="50.0" r="1.9" fill="#f2f2f2"/><circle cx="169.4" cy="60.0" r="3.2" fill="#2f7736"/><circle cx="169.4" cy="60.0" r="1.9" fill="#f2f2f2"/><circle cx="205.2" cy="47.3" r="3.2" fill="#2f7736"/><circle cx="205.2" cy="47.3" r="1.9" fill="#f2f2f2"/><circle cx="200.8" cy="60.9" r="3.2" fill="#2f7736"/><circle cx="200.8" cy="60.9" r="1.9" fill="#f2f2f2"/><circle cx="333.4" cy="20.4" r="3.2" fill="#2f7736"/><circle cx="333.4" cy="20.4" r="1.9" fill="#f2f2f2"/><circle cx="358.0" cy="38.5" r="3.2" fill="#2f7736"/><circle cx="358.0" cy="38.5" r="1.9" fill="#f2f2f2"/><circle cx="394.0" cy="10.4" r="3.2" fill="#2f7736"/><circle cx="394.0" cy="10.4" r="1.9" fill="#f2f2f2"/><circle cx="394.0" cy="34.6" r="3.2" fill="#2f7736"/><circle cx="394.0" cy="34.6" r="1.9" fill="#f2f2f2"/><circle cx="43.6" cy="183.2" r="3.2" fill="#2f7736"/><circle cx="43.6" cy="183.2" r="1.9" fill="#f2f2f2"/><circle cx="54.2" cy="183.2" r="3.2" fill="#2f7736"/><circle cx="54.2" cy="183.2" r="1.9" fill="#f2f2f2"/><circle cx="43.6" cy="195.0" r="3.2" fill="#2f7736"/><circle cx="43.6" cy="195.0" r="1.9" fill="#f2f2f2"/><circle cx="54.2" cy="195.0" r="3.2" fill="#2f7736"/><circle cx="54.2" cy="195.0" r="1.9" fill="#f2f2f2"/><circle cx="43.6" cy="206.7" r="3.2" fill="#2f7736"/><circle cx="43.6" cy="206.7" r="1.9" fill="#f2f2f2"/><circle cx="54.2" cy="206.7" r="3.2" fill="#2f7736"/><circle cx="54.2" cy="206.7" r="1.9" fill="#f2f2f2"/><circle cx="10.4" cy="219.0" r="3.2" fill="#2f7736"/><circle cx="10.4" cy="219.0" r="1.9" fill="#f2f2f2"/><circle cx="10.4" cy="238.5" r="3.2" fill="#2f7736"/><circle cx="10.4" cy="238.5" r="1.9" fill="#f2f2f2"/><circle cx="93.0" cy="174.5" r="3.2" fill="#2f7736"/><circle cx="93.0" cy="174.5" r="1.9" fill="#f2f2f2"/><circle cx="109.5" cy="179.5" r="3.2" fill="#2f7736"/><circle cx="109.5" cy="179.5" r="1.9" fill="#f2f2f2"/><circle cx="81.2" cy="215.5" r="3.2" fill="#2f7736"/><circle cx="81.2" cy="215.5" r="1.9" fill="#f2f2f2"/><circle cx="89.1" cy="215.5" r="3.2" fill="#2f7736"/><circle cx="89.1" cy="215.5" r="1.9" fill="#f2f2f2"/><circle cx="109.5" cy="210.0" r="3.2" fill="#2f7736"/><circle cx="109.5" cy="210.0" r="1.9" fill="#f2f2f2"/><circle cx="105.6" cy="236.8" r="3.2" fill="#2f7736"/><circle cx="105.6" cy="236.8" r="1.9" fill="#f2f2f2"/><circle cx="114.3" cy="236.8" r="3.2" fill="#2f7736"/><circle cx="114.3" cy="236.8" r="1.9" fill="#f2f2f2"/><circle cx="132.8" cy="166.7" r="3.2" fill="#2f7736"/><circle cx="132.8" cy="166.7" r="1.9" fill="#f2f2f2"/><circle cx="190.0" cy="167.5" r="3.2" fill="#2f7736"/><circle cx="190.0" cy="167.5" r="1.9" fill="#f2f2f2"/><circle cx="155.6" cy="191.0" r="3.2" fill="#2f7736"/><circle cx="155.6" cy="191.0" r="1.9" fill="#f2f2f2"/><circle cx="141.6" cy="200.0" r="3.2" fill="#2f7736"/><circle cx="141.6" cy="200.0" r="1.9" fill="#f2f2f2"/><circle cx="141.6" cy="209.5" r="3.2" fill="#2f7736"/><circle cx="141.6" cy="209.5" r="1.9" fill="#f2f2f2"/><circle cx="163.2" cy="212.5" r="3.2" fill="#2f7736"/><circle cx="163.2" cy="212.5" r="1.9" fill="#f2f2f2"/><circle cx="172.9" cy="212.5" r="3.2" fill="#2f7736"/><circle cx="172.9" cy="212.5" r="1.9" fill="#f2f2f2"/><circle cx="185.6" cy="222.5" r="3.2" fill="#2f7736"/><circle cx="185.6" cy="222.5" r="1.9" fill="#f2f2f2"/><circle cx="199.7" cy="224.0" r="3.2" fill="#2f7736"/><circle cx="199.7" cy="224.0" r="1.9" fill="#f2f2f2"/><circle cx="127.0" cy="222.0" r="3.2" fill="#2f7736"/><circle cx="127.0" cy="222.0" r="1.9" fill="#f2f2f2"/><circle cx="136.5" cy="222.0" r="3.2" fill="#2f7736"/><circle cx="136.5" cy="222.0" r="1.9" fill="#f2f2f2"/><circle cx="199.7" cy="243.5" r="3.2" fill="#2f7736"/><circle cx="199.7" cy="243.5" r="1.9" fill="#f2f2f2"/><circle cx="394.0" cy="227.0" r="3.2" fill="#2f7736"/><circle cx="394.0" cy="227.0" r="1.9" fill="#f2f2f2"/><circle cx="153.0" cy="100.0" r="3.2" fill="#2f7736"/><circle cx="153.0" cy="100.0" r="1.9" fill="#f2f2f2"/><circle cx="153.0" cy="110.0" r="3.2" fill="#2f7736"/><circle cx="153.0" cy="110.0" r="1.9" fill="#f2f2f2"/><circle cx="160.0" cy="92.0" r="3.2" fill="#2f7736"/><circle cx="160.0" cy="92.0" r="1.9" fill="#f2f2f2"/><circle cx="126.0" cy="108.0" r="3.2" fill="#2f7736"/><circle cx="126.0" cy="108.0" r="1.9" fill="#f2f2f2"/><circle cx="115.0" cy="100.0" r="3.2" fill="#2f7736"/><circle cx="115.0" cy="100.0" r="1.9" fill="#f2f2f2"/><polyline fill="none" stroke="#f2f2f2" stroke-width="1" stroke-linejoin="round" points="210.0,58.0 210.0,52.5 215.0,52.5"/><polyline fill="none" stroke="#f2f2f2" stroke-width="1" stroke-linejoin="round" points="76.0,104.0 76.0,100.0 80.0,100.0"/><polyline fill="none" stroke="#f2f2f2" stroke-width="1" stroke-linejoin="round" points="119.0,100.0 122.0,100.0 122.0,104.0"/><polyline fill="none" stroke="#f2f2f2" stroke-width="1" stroke-linejoin="round" points="76.0,158.0 76.0,163.0 80.0,163.0"/><polyline fill="none" stroke="#f2f2f2" stroke-width="1" stroke-linejoin="round" points="121.0,163.0 125.0,163.0"/><polyline fill="none" stroke="#f2f2f2" stroke-width="1" stroke-linejoin="round" points="207.0,220.0 207.0,225.0 213.0,225.0"/></svg></div>

<div class="a" style="left:810px;top:112px;width:682px;height:300px;border-radius:6px;background:#fafbfc"></div>
<div class="a" id="pcbbot" style="left:946px;top:133px;width:409px;height:258px"><svg width="409" height="258" viewBox="0 0 409 258"><rect x="0.7" y="0.4" width="408.1" height="257.8" fill="#c9dbcd"/><polygon fill="#c3d5c7" points="18.0,8.0 258.0,8.0 258.0,30.0 240.0,30.0 236.0,36.0 208.0,36.0 208.0,68.0 62.0,68.0 30.0,36.0 18.0,20.0"/><polyline fill="none" stroke="#c9dbcd" stroke-width="2.2" stroke-linejoin="round" stroke-linecap="round" points="50.0,9.0 60.0,14.0 208.0,14.0"/><polyline fill="none" stroke="#c9dbcd" stroke-width="2.2" stroke-linejoin="round" stroke-linecap="round" points="68.0,21.0 210.0,21.0"/><polyline fill="none" stroke="#c9dbcd" stroke-width="2.2" stroke-linejoin="round" stroke-linecap="round" points="40.0,30.0 64.0,50.0 208.0,50.0"/><polyline fill="none" stroke="#c3d5c7" stroke-width="7" stroke-linejoin="round" stroke-linecap="round" points="198.0,48.0 225.0,48.0 236.0,51.0"/><polyline fill="none" stroke="#c3d5c7" stroke-width="7" stroke-linejoin="round" stroke-linecap="round" points="204.0,62.0 236.0,61.0"/><polyline fill="none" stroke="#c3d5c7" stroke-width="6" stroke-linejoin="round" stroke-linecap="round" points="214.0,21.0 247.0,21.0"/><polyline fill="none" stroke="#c3d5c7" stroke-width="5" stroke-linejoin="round" stroke-linecap="round" points="225.0,13.5 249.0,13.5"/><polyline fill="none" stroke="#c3d5c7" stroke-width="4.5" stroke-linejoin="round" stroke-linecap="round" points="262.0,9.0 262.0,96.0 302.0,96.0 302.0,248.0"/><polyline fill="none" stroke="#c3d5c7" stroke-width="7" stroke-linejoin="round" stroke-linecap="round" points="234.0,102.0 234.0,111.0 250.0,111.0 262.0,125.0 262.0,140.0 250.0,158.0 240.0,158.0"/><polyline fill="none" stroke="#c3d5c7" stroke-width="5" stroke-linejoin="round" stroke-linecap="round" points="290.0,9.0 290.0,54.0 306.0,70.0 372.0,70.0 390.0,84.0"/><polyline fill="none" stroke="#c3d5c7" stroke-width="5" stroke-linejoin="round" stroke-linecap="round" points="298.0,9.0 298.0,50.0 318.0,64.0 366.0,64.0 385.0,80.0"/><polyline fill="none" stroke="#c3d5c7" stroke-width="4" stroke-linejoin="round" stroke-linecap="round" points="310.0,9.0 310.0,47.0 322.0,57.0 360.0,57.0 378.0,72.0"/><polyline fill="none" stroke="#c3d5c7" stroke-width="6" stroke-linejoin="round" stroke-linecap="round" points="214.0,149.0 228.0,149.0 228.0,160.0 238.0,160.0 250.0,172.0 273.0,172.0"/><polyline fill="none" stroke="#c3d5c7" stroke-width="6" stroke-linejoin="round" stroke-linecap="round" points="250.0,195.0 262.0,195.0 272.0,185.0 272.0,150.0 258.0,132.0 254.0,116.0"/><polyline fill="none" stroke="#c3d5c7" stroke-width="6" stroke-linejoin="round" stroke-linecap="round" points="140.0,258.0 140.0,160.0 158.0,148.0 205.0,148.0"/><polyline fill="none" stroke="#c3d5c7" stroke-width="5" stroke-linejoin="round" stroke-linecap="round" points="150.0,258.0 150.0,165.0 162.0,155.0 205.0,155.0"/><polyline fill="none" stroke="#c3d5c7" stroke-width="5" stroke-linejoin="round" stroke-linecap="round" points="162.0,258.0 162.0,168.0 172.0,160.0 205.0,160.0"/><polyline fill="none" stroke="#c3d5c7" stroke-width="6" stroke-linejoin="round" stroke-linecap="round" points="219.0,258.0 219.0,226.0"/><polyline fill="none" stroke="#c3d5c7" stroke-width="6" stroke-linejoin="round" stroke-linecap="round" points="232.0,258.0 232.0,218.0"/><polyline fill="none" stroke="#c3d5c7" stroke-width="6" stroke-linejoin="round" stroke-linecap="round" points="242.0,258.0 242.0,218.0"/><polyline fill="none" stroke="#c3d5c7" stroke-width="8" stroke-linejoin="round" stroke-linecap="round" points="255.0,250.0 262.0,241.0 302.0,241.0 315.0,252.0 315.0,258.0"/><polyline fill="none" stroke="#c3d5c7" stroke-width="6" stroke-linejoin="round" stroke-linecap="round" points="297.5,183.0 297.5,215.0"/><polyline fill="none" stroke="#c3d5c7" stroke-width="5" stroke-linejoin="round" stroke-linecap="round" points="314.0,178.0 306.0,184.0 306.0,230.0 320.0,245.0"/><rect x="12.4" y="0.4" width="9.3" height="8.5" fill="#efe3df"/><circle cx="17.1" cy="0.4" r="3" fill="#fafbfc"/><rect x="25.1" y="0.4" width="9.3" height="8.5" fill="#efe3df"/><circle cx="29.7" cy="0.4" r="3" fill="#fafbfc"/><rect x="37.7" y="0.4" width="9.3" height="8.5" fill="#efe3df"/><circle cx="42.4" cy="0.4" r="3" fill="#fafbfc"/><rect x="50.4" y="0.4" width="9.3" height="8.5" fill="#efe3df"/><circle cx="55.0" cy="0.4" r="3" fill="#fafbfc"/><rect x="63.0" y="0.4" width="9.3" height="8.5" fill="#efe3df"/><circle cx="67.7" cy="0.4" r="3" fill="#fafbfc"/><rect x="75.7" y="0.4" width="9.3" height="8.5" fill="#efe3df"/><circle cx="80.3" cy="0.4" r="3" fill="#fafbfc"/><rect x="88.3" y="0.4" width="9.3" height="8.5" fill="#efe3df"/><circle cx="93.0" cy="0.4" r="3" fill="#fafbfc"/><rect x="101.0" y="0.4" width="9.3" height="8.5" fill="#efe3df"/><circle cx="105.6" cy="0.4" r="3" fill="#fafbfc"/><rect x="113.6" y="0.4" width="9.3" height="8.5" fill="#efe3df"/><circle cx="118.3" cy="0.4" r="3" fill="#fafbfc"/><rect x="126.3" y="0.4" width="9.3" height="8.5" fill="#efe3df"/><circle cx="130.9" cy="0.4" r="3" fill="#fafbfc"/><rect x="138.9" y="0.4" width="9.3" height="8.5" fill="#efe3df"/><circle cx="143.6" cy="0.4" r="3" fill="#fafbfc"/><rect x="151.6" y="0.4" width="9.3" height="8.5" fill="#efe3df"/><circle cx="156.2" cy="0.4" r="3" fill="#fafbfc"/><rect x="164.2" y="0.4" width="9.3" height="8.5" fill="#efe3df"/><circle cx="168.9" cy="0.4" r="3" fill="#fafbfc"/><rect x="176.9" y="0.4" width="9.3" height="8.5" fill="#efe3df"/><circle cx="181.5" cy="0.4" r="3" fill="#fafbfc"/><rect x="290.6" y="0.4" width="9.3" height="8.5" fill="#efe3df"/><circle cx="295.2" cy="0.4" r="3" fill="#fafbfc"/><rect x="303.2" y="0.4" width="9.3" height="8.5" fill="#efe3df"/><circle cx="307.8" cy="0.4" r="3" fill="#fafbfc"/><rect x="315.6" y="0.4" width="9.3" height="8.5" fill="#efe3df"/><circle cx="320.2" cy="0.4" r="3" fill="#fafbfc"/><rect x="328.4" y="0.4" width="9.3" height="8.5" fill="#efe3df"/><circle cx="333.0" cy="0.4" r="3" fill="#fafbfc"/><rect x="353.5" y="0.4" width="9.3" height="8.5" fill="#efe3df"/><circle cx="358.1" cy="0.4" r="3" fill="#fafbfc"/><rect x="12.4" y="249.8" width="9.3" height="8.4" fill="#efe3df"/><circle cx="17.1" cy="258.2" r="3" fill="#fafbfc"/><rect x="25.1" y="249.8" width="9.3" height="8.4" fill="#efe3df"/><circle cx="29.7" cy="258.2" r="3" fill="#fafbfc"/><rect x="37.7" y="249.8" width="9.3" height="8.4" fill="#efe3df"/><circle cx="42.4" cy="258.2" r="3" fill="#fafbfc"/><rect x="50.4" y="249.8" width="9.3" height="8.4" fill="#efe3df"/><circle cx="55.0" cy="258.2" r="3" fill="#fafbfc"/><rect x="63.0" y="249.8" width="9.3" height="8.4" fill="#efe3df"/><circle cx="67.7" cy="258.2" r="3" fill="#fafbfc"/><rect x="75.7" y="249.8" width="9.3" height="8.4" fill="#efe3df"/><circle cx="80.3" cy="258.2" r="3" fill="#fafbfc"/><rect x="88.3" y="249.8" width="9.3" height="8.4" fill="#efe3df"/><circle cx="93.0" cy="258.2" r="3" fill="#fafbfc"/><rect x="101.0" y="249.8" width="9.3" height="8.4" fill="#efe3df"/><circle cx="105.6" cy="258.2" r="3" fill="#fafbfc"/><rect x="113.6" y="249.8" width="9.3" height="8.4" fill="#efe3df"/><circle cx="118.3" cy="258.2" r="3" fill="#fafbfc"/><rect x="126.3" y="249.8" width="9.3" height="8.4" fill="#efe3df"/><circle cx="130.9" cy="258.2" r="3" fill="#fafbfc"/><rect x="138.9" y="249.8" width="9.3" height="8.4" fill="#efe3df"/><circle cx="143.6" cy="258.2" r="3" fill="#fafbfc"/><rect x="151.6" y="249.8" width="9.3" height="8.4" fill="#efe3df"/><circle cx="156.2" cy="258.2" r="3" fill="#fafbfc"/><rect x="164.2" y="249.8" width="9.3" height="8.4" fill="#efe3df"/><circle cx="168.9" cy="258.2" r="3" fill="#fafbfc"/><rect x="176.9" y="249.8" width="9.3" height="8.4" fill="#efe3df"/><circle cx="181.5" cy="258.2" r="3" fill="#fafbfc"/><rect x="214.7" y="249.8" width="9.3" height="8.4" fill="#efe3df"/><circle cx="219.3" cy="258.2" r="3" fill="#fafbfc"/><rect x="227.0" y="249.8" width="9.3" height="8.4" fill="#efe3df"/><circle cx="231.7" cy="258.2" r="3" fill="#fafbfc"/><rect x="239.7" y="249.8" width="9.3" height="8.4" fill="#efe3df"/><circle cx="244.3" cy="258.2" r="3" fill="#fafbfc"/><rect x="315.6" y="249.8" width="9.3" height="8.4" fill="#efe3df"/><circle cx="320.2" cy="258.2" r="3" fill="#fafbfc"/><rect x="328.4" y="249.8" width="9.3" height="8.4" fill="#efe3df"/><circle cx="333.0" cy="258.2" r="3" fill="#fafbfc"/><rect x="340.8" y="249.8" width="9.3" height="8.4" fill="#efe3df"/><circle cx="345.4" cy="258.2" r="3" fill="#fafbfc"/><rect x="353.5" y="249.8" width="9.3" height="8.4" fill="#efe3df"/><circle cx="358.1" cy="258.2" r="3" fill="#fafbfc"/><rect x="378.5" y="249.8" width="9.3" height="8.4" fill="#efe3df"/><circle cx="383.1" cy="258.2" r="3" fill="#fafbfc"/><circle cx="393.7" cy="15.6" r="6.6" fill="#fbfcfb"/><circle cx="20.4" cy="203.7" r="6.3" fill="#fbfcfb"/><circle cx="5.6" cy="10.7" r="1.9" fill="#fbfcfb"/><circle cx="5.6" cy="35.2" r="1.9" fill="#fbfcfb"/><circle cx="67.7" cy="20.6" r="1.9" fill="#fbfcfb"/><circle cx="42.3" cy="39.3" r="1.9" fill="#fbfcfb"/><circle cx="198.7" cy="48.1" r="1.9" fill="#fbfcfb"/><circle cx="203.5" cy="61.9" r="1.9" fill="#fbfcfb"/><circle cx="94.2" cy="129.2" r="1.9" fill="#fbfcfb"/><circle cx="3.5" cy="243.0" r="1.9" fill="#fbfcfb"/><circle cx="224.6" cy="13.5" r="1.9" fill="#fbfcfb"/><circle cx="249.4" cy="13.5" r="1.9" fill="#fbfcfb"/><circle cx="214.3" cy="21.0" r="1.9" fill="#fbfcfb"/><circle cx="247.3" cy="23.4" r="1.9" fill="#fbfcfb"/><circle cx="269.3" cy="10.7" r="1.9" fill="#fbfcfb"/><circle cx="235.6" cy="51.0" r="1.9" fill="#fbfcfb"/><circle cx="235.6" cy="61.0" r="1.9" fill="#fbfcfb"/><circle cx="204.0" cy="61.6" r="1.9" fill="#fbfcfb"/><circle cx="245.2" cy="94.9" r="1.9" fill="#fbfcfb"/><circle cx="254.6" cy="94.9" r="1.9" fill="#fbfcfb"/><circle cx="234.5" cy="101.7" r="1.9" fill="#fbfcfb"/><circle cx="234.5" cy="110.8" r="1.9" fill="#fbfcfb"/><circle cx="269.3" cy="104.9" r="1.9" fill="#fbfcfb"/><circle cx="305.7" cy="80.4" r="1.9" fill="#fbfcfb"/><circle cx="331.8" cy="87.7" r="1.9" fill="#fbfcfb"/><circle cx="365.9" cy="78.0" r="1.9" fill="#fbfcfb"/><circle cx="365.9" cy="86.0" r="1.9" fill="#fbfcfb"/><circle cx="384.7" cy="79.9" r="1.9" fill="#fbfcfb"/><circle cx="394.8" cy="78.1" r="1.9" fill="#fbfcfb"/><circle cx="378.8" cy="20.4" r="1.9" fill="#fbfcfb"/><circle cx="378.8" cy="40.3" r="1.9" fill="#fbfcfb"/><circle cx="398.5" cy="40.3" r="1.9" fill="#fbfcfb"/><circle cx="398.5" cy="60.0" r="1.9" fill="#fbfcfb"/><circle cx="398.5" cy="119.3" r="1.9" fill="#fbfcfb"/><circle cx="388.9" cy="129.2" r="1.9" fill="#fbfcfb"/><circle cx="215.0" cy="149.0" r="1.9" fill="#fbfcfb"/><circle cx="215.7" cy="159.0" r="1.9" fill="#fbfcfb"/><circle cx="228.7" cy="159.0" r="1.9" fill="#fbfcfb"/><circle cx="238.4" cy="156.5" r="1.9" fill="#fbfcfb"/><circle cx="214.3" cy="170.7" r="1.9" fill="#fbfcfb"/><circle cx="273.4" cy="170.3" r="1.9" fill="#fbfcfb"/><circle cx="250.0" cy="195.0" r="1.9" fill="#fbfcfb"/><circle cx="264.5" cy="204.0" r="1.9" fill="#fbfcfb"/><circle cx="264.5" cy="214.0" r="1.9" fill="#fbfcfb"/><circle cx="297.5" cy="183.0" r="1.9" fill="#fbfcfb"/><circle cx="314.0" cy="177.8" r="1.9" fill="#fbfcfb"/><circle cx="297.5" cy="215.0" r="1.9" fill="#fbfcfb"/><circle cx="219.0" cy="226.6" r="1.9" fill="#fbfcfb"/><circle cx="232.0" cy="216.6" r="1.9" fill="#fbfcfb"/><circle cx="242.0" cy="216.6" r="1.9" fill="#fbfcfb"/><circle cx="269.4" cy="226.2" r="1.9" fill="#fbfcfb"/><circle cx="279.3" cy="226.2" r="1.9" fill="#fbfcfb"/><circle cx="261.0" cy="241.3" r="1.9" fill="#fbfcfb"/><circle cx="269.4" cy="241.3" r="1.9" fill="#fbfcfb"/><circle cx="292.0" cy="241.3" r="1.9" fill="#fbfcfb"/><circle cx="301.3" cy="241.3" r="1.9" fill="#fbfcfb"/><circle cx="318.0" cy="219.8" r="1.9" fill="#fbfcfb"/><circle cx="326.3" cy="219.8" r="1.9" fill="#fbfcfb"/><circle cx="353.8" cy="187.0" r="1.9" fill="#fbfcfb"/><circle cx="364.8" cy="187.0" r="1.9" fill="#fbfcfb"/><circle cx="353.8" cy="198.7" r="1.9" fill="#fbfcfb"/><circle cx="364.8" cy="198.7" r="1.9" fill="#fbfcfb"/><circle cx="353.8" cy="210.8" r="1.9" fill="#fbfcfb"/><circle cx="364.8" cy="210.8" r="1.9" fill="#fbfcfb"/><circle cx="398.9" cy="144.0" r="1.9" fill="#fbfcfb"/><circle cx="370.7" cy="134.0" r="1.9" fill="#fbfcfb"/><circle cx="398.9" cy="223.6" r="1.9" fill="#fbfcfb"/><circle cx="398.9" cy="243.5" r="1.9" fill="#fbfcfb"/><circle cx="309.4" cy="134.0" r="1.9" fill="#fbfcfb"/><circle cx="205.4" cy="228.4" r="1.9" fill="#fbfcfb"/><circle cx="205.4" cy="248.0" r="1.9" fill="#fbfcfb"/><g fill="#fdfefd" stroke="#fdfefd" stroke-width="0.35" font-family="Liberation Mono" ><text x="60.5" y="91.8" font-size="13" textLength="81" lengthAdjust="spacingAndGlyphs">JLCJLCJLCJLC</text><text x="41" y="175.8" font-size="16.5" textLength="164.5" lengthAdjust="spacingAndGlyphs">ESP32-S3 SoundCore</text><text x="10.5" y="191.6" font-size="15.5" textLength="225.5" lengthAdjust="spacingAndGlyphs">Designed By R.Suzuki(JA1TYE)</text></g></svg></div>

<!-- radios -->
<div class="a" style="left:276px;top:437px;width:24px;height:24px;border-radius:50%;background:#2b8ae8"></div>
<svg class="a" style="left:276px;top:437px" width="24" height="24"><polyline points="7,11.7 11.3,15.3 16.3,8.1" fill="none" stroke="#fff" stroke-width="1.7"/></svg>
<div class="t" style="left:312px;top:437px">Assemble top side</div>
<div class="a" style="left:1043px;top:437px;width:24px;height:24px;box-sizing:border-box;border-radius:50%;border:1px solid #cfcfcf"></div>
<div class="t" style="left:1080px;top:437px">Assemble bottom side</div>

<!-- options -->
<div class="t" style="left:52.5px;top:520px">PCBA Type</div>
<div class="q" style="left:324px;top:521px"><svg width="21" height="21"><circle cx="10.5" cy="10.5" r="10.5" fill="#dcdcdc"/><path d="M6.9 8.3C6.9 5.9 8.5 4.4 10.5 4.4C12.6 4.4 14.1 5.8 14.1 7.6C14.1 9.3 12.9 10.1 11.9 10.9C11 11.6 10.5 12.3 10.5 13.7" fill="none" stroke="#fff" stroke-width="2.5" stroke-linecap="round"/><circle cx="10.5" cy="16.6" r="1.55" fill="#fff"/></svg></div>
<div class="a" style="left:358px;top:498px;width:573px;height:73px;box-sizing:border-box;border:3px solid #e8141b;border-radius:18px"></div>
<div class="btn sel" style="left:368px;top:510px;width:154px;height:44px"><span>Economic</span><svg width="21" height="21"><polygon points="21,0 21,21 0,21" fill="#2b8ae8"/><polyline points="9,14.3 12,17.4 17.7,11.2" fill="none" stroke="#fff" stroke-width="1.4"/></svg></div>
<div class="btn" style="left:554px;top:510px;width:147px;height:44px"><span>Standard</span></div>
<div class="t" style="left:736px;top:520px;font-size:18px;color:#999;text-decoration:underline">What's the difference?</div>

<div class="t" style="left:52.5px;top:592px">Assembly Side</div>
<div class="q" style="left:324px;top:593px"><svg width="21" height="21"><circle cx="10.5" cy="10.5" r="10.5" fill="#dcdcdc"/><path d="M6.9 8.3C6.9 5.9 8.5 4.4 10.5 4.4C12.6 4.4 14.1 5.8 14.1 7.6C14.1 9.3 12.9 10.1 11.9 10.9C11 11.6 10.5 12.3 10.5 13.7" fill="none" stroke="#fff" stroke-width="2.5" stroke-linecap="round"/><circle cx="10.5" cy="16.6" r="1.55" fill="#fff"/></svg></div>
<div class="btn sel" style="left:368px;top:582px;width:143px;height:44px"><span>Top Side</span><svg width="21" height="21"><polygon points="21,0 21,21 0,21" fill="#2b8ae8"/><polyline points="9,14.3 12,17.4 17.7,11.2" fill="none" stroke="#fff" stroke-width="1.4"/></svg></div>
<div class="btn" style="left:531px;top:582px;width:177px;height:44px"><span>Bottom Side</span></div>
<div class="btn dis" style="left:728px;top:582px;width:163px;height:44px"><span>Both Sides</span></div>

<div class="t" style="left:52.5px;top:664px">PCBA Qty</div>
<div class="q" style="left:324px;top:665px"><svg width="21" height="21"><circle cx="10.5" cy="10.5" r="10.5" fill="#dcdcdc"/><path d="M6.9 8.3C6.9 5.9 8.5 4.4 10.5 4.4C12.6 4.4 14.1 5.8 14.1 7.6C14.1 9.3 12.9 10.1 11.9 10.9C11 11.6 10.5 12.3 10.5 13.7" fill="none" stroke="#fff" stroke-width="2.5" stroke-linecap="round"/><circle cx="10.5" cy="16.6" r="1.55" fill="#fff"/></svg></div>
<div class="btn sel" style="left:368px;top:654px;width:73px;height:44px"><span>5</span><svg width="21" height="21"><polygon points="21,0 21,21 0,21" fill="#2b8ae8"/><polyline points="9,14.3 12,17.4 17.7,11.2" fill="none" stroke="#fff" stroke-width="1.4"/></svg></div>
<div class="btn" style="left:461px;top:654px;width:74px;height:44px"><span>2</span></div>

<div class="t" style="left:52.5px;top:736px">Tooling holes</div>
<div class="q" style="left:324px;top:737px"><svg width="21" height="21"><circle cx="10.5" cy="10.5" r="10.5" fill="#dcdcdc"/><path d="M6.9 8.3C6.9 5.9 8.5 4.4 10.5 4.4C12.6 4.4 14.1 5.8 14.1 7.6C14.1 9.3 12.9 10.1 11.9 10.9C11 11.6 10.5 12.3 10.5 13.7" fill="none" stroke="#fff" stroke-width="2.5" stroke-linecap="round"/><circle cx="10.5" cy="16.6" r="1.55" fill="#fff"/></svg></div>
<div class="btn sel" style="left:368px;top:726px;width:237px;height:44px"><span>Added by JLCPCB</span><svg width="21" height="21"><polygon points="21,0 21,21 0,21" fill="#2b8ae8"/><polyline points="9,14.3 12,17.4 17.7,11.2" fill="none" stroke="#fff" stroke-width="1.4"/></svg></div>
<div class="btn" style="left:625px;top:726px;width:247px;height:44px"><span>Added by Customer</span></div>

<div class="t" style="left:52.5px;top:808px">Confirm Parts Placement</div>
<div class="q" style="left:324px;top:809px"><svg width="21" height="21"><circle cx="10.5" cy="10.5" r="10.5" fill="#dcdcdc"/><path d="M6.9 8.3C6.9 5.9 8.5 4.4 10.5 4.4C12.6 4.4 14.1 5.8 14.1 7.6C14.1 9.3 12.9 10.1 11.9 10.9C11 11.6 10.5 12.3 10.5 13.7" fill="none" stroke="#fff" stroke-width="2.5" stroke-linecap="round"/><circle cx="10.5" cy="16.6" r="1.55" fill="#fff"/></svg></div>
<div class="btn sel" style="left:368px;top:798px;width:88px;height:44px"><span>No</span><svg width="21" height="21"><polygon points="21,0 21,21 0,21" fill="#2b8ae8"/><polyline points="9,14.3 12,17.4 17.7,11.2" fill="none" stroke="#fff" stroke-width="1.4"/></svg></div>
<div class="btn" style="left:476px;top:798px;width:97px;height:44px"><span>Yes</span></div>

<!-- advanced -->
<div class="a" style="left:53px;top:887px;width:1440px;height:51px;border-radius:5px;background:#edeef3"></div>
<div class="t" style="left:67px;top:901px;-webkit-text-stroke:0.65px #222">Advanced Options</div>
<svg class="a" style="left:1456px;top:905px" width="20" height="14" viewBox="0 0 20 14"><path d="M2.5 11.5L10 4L17.5 11.5" fill="none" stroke="#555" stroke-width="2"/></svg>

<!-- selects -->
<div class="t" style="left:52.5px;top:980px">Photo Confirmation</div><div class="q" style="left:237px;top:984px"><svg width="21" height="21"><circle cx="10.5" cy="10.5" r="10.5" fill="#dcdcdc"/><path d="M6.9 8.3C6.9 5.9 8.5 4.4 10.5 4.4C12.6 4.4 14.1 5.8 14.1 7.6C14.1 9.3 12.9 10.1 11.9 10.9C11 11.6 10.5 12.3 10.5 13.7" fill="none" stroke="#fff" stroke-width="2.5" stroke-linecap="round"/><circle cx="10.5" cy="16.6" r="1.55" fill="#fff"/></svg></div>
<div class="sl" style="left:360px;top:968px"><span>No</span><svg width="18" height="10" viewBox="0 0 18 10"><path d="M1 1L9 9L17 1" fill="none" stroke="#555" stroke-width="1.3"/></svg></div>
<div class="t" style="left:773px;top:980px">Board Cleaning</div><div class="q" style="left:922px;top:984px"><svg width="21" height="21"><circle cx="10.5" cy="10.5" r="10.5" fill="#dcdcdc"/><path d="M6.9 8.3C6.9 5.9 8.5 4.4 10.5 4.4C12.6 4.4 14.1 5.8 14.1 7.6C14.1 9.3 12.9 10.1 11.9 10.9C11 11.6 10.5 12.3 10.5 13.7" fill="none" stroke="#fff" stroke-width="2.5" stroke-linecap="round"/><circle cx="10.5" cy="16.6" r="1.55" fill="#fff"/></svg></div>
<div class="sl" style="left:1080px;top:968px"><span>No</span><svg width="18" height="10" viewBox="0 0 18 10"><path d="M1 1L9 9L17 1" fill="none" stroke="#555" stroke-width="1.3"/></svg></div>

<div class="t" style="left:52.5px;top:1058px">Conformal Coating</div><div class="q" style="left:233px;top:1062px"><svg width="21" height="21"><circle cx="10.5" cy="10.5" r="10.5" fill="#dcdcdc"/><path d="M6.9 8.3C6.9 5.9 8.5 4.4 10.5 4.4C12.6 4.4 14.1 5.8 14.1 7.6C14.1 9.3 12.9 10.1 11.9 10.9C11 11.6 10.5 12.3 10.5 13.7" fill="none" stroke="#fff" stroke-width="2.5" stroke-linecap="round"/><circle cx="10.5" cy="16.6" r="1.55" fill="#fff"/></svg></div>
<div class="sl" style="left:360px;top:1046px"><span>No</span><svg width="18" height="10" viewBox="0 0 18 10"><path d="M1 1L9 9L17 1" fill="none" stroke="#555" stroke-width="1.3"/></svg></div>
<div class="t" style="left:773px;top:1058px">Bake Components</div><div class="q" style="left:950px;top:1062px"><svg width="21" height="21"><circle cx="10.5" cy="10.5" r="10.5" fill="#dcdcdc"/><path d="M6.9 8.3C6.9 5.9 8.5 4.4 10.5 4.4C12.6 4.4 14.1 5.8 14.1 7.6C14.1 9.3 12.9 10.1 11.9 10.9C11 11.6 10.5 12.3 10.5 13.7" fill="none" stroke="#fff" stroke-width="2.5" stroke-linecap="round"/><circle cx="10.5" cy="16.6" r="1.55" fill="#fff"/></svg></div>
<div class="sl" style="left:1080px;top:1046px"><span>No</span><svg width="18" height="10" viewBox="0 0 18 10"><path d="M1 1L9 9L17 1" fill="none" stroke="#555" stroke-width="1.3"/></svg></div>

<div class="t" style="left:52.5px;top:1142px">Packaging</div><div class="q" style="left:156px;top:1146px"><svg width="21" height="21"><circle cx="10.5" cy="10.5" r="10.5" fill="#dcdcdc"/><path d="M6.9 8.3C6.9 5.9 8.5 4.4 10.5 4.4C12.6 4.4 14.1 5.8 14.1 7.6C14.1 9.3 12.9 10.1 11.9 10.9C11 11.6 10.5 12.3 10.5 13.7" fill="none" stroke="#fff" stroke-width="2.5" stroke-linecap="round"/><circle cx="10.5" cy="16.6" r="1.55" fill="#fff"/></svg></div>
<div class="sl" style="left:360px;top:1130px"><span>Antistatic bubble film</span><svg width="18" height="10" viewBox="0 0 18 10"><path d="M1 1L9 9L17 1" fill="none" stroke="#555" stroke-width="1.3"/></svg></div>
<div class="t" style="left:773px;top:1127px">Depanel boards &amp; edge rail</div>
<div class="t" style="left:773px;top:1157px">before delivery</div><div class="q" style="left:914px;top:1160px"><svg width="21" height="21"><circle cx="10.5" cy="10.5" r="10.5" fill="#dcdcdc"/><path d="M6.9 8.3C6.9 5.9 8.5 4.4 10.5 4.4C12.6 4.4 14.1 5.8 14.1 7.6C14.1 9.3 12.9 10.1 11.9 10.9C11 11.6 10.5 12.3 10.5 13.7" fill="none" stroke="#fff" stroke-width="2.5" stroke-linecap="round"/><circle cx="10.5" cy="16.6" r="1.55" fill="#fff"/></svg></div>
<div class="sl" style="left:1080px;top:1130px"><span>No</span><svg width="18" height="10" viewBox="0 0 18 10"><path d="M1 1L9 9L17 1" fill="none" stroke="#555" stroke-width="1.3"/></svg></div>

<div class="t" style="left:52.5px;top:1226px">Solder Paste</div><div class="q" style="left:177px;top:1230px"><svg width="21" height="21"><circle cx="10.5" cy="10.5" r="10.5" fill="#dcdcdc"/><path d="M6.9 8.3C6.9 5.9 8.5 4.4 10.5 4.4C12.6 4.4 14.1 5.8 14.1 7.6C14.1 9.3 12.9 10.1 11.9 10.9C11 11.6 10.5 12.3 10.5 13.7" fill="none" stroke="#fff" stroke-width="2.5" stroke-linecap="round"/><circle cx="10.5" cy="16.6" r="1.55" fill="#fff"/></svg></div>
<div class="sl" style="left:360px;top:1214px"><span>Sn96.5%, Ag3.0%, Cu0.5%</span><svg width="18" height="10" viewBox="0 0 18 10"><path d="M1 1L9 9L17 1" fill="none" stroke="#555" stroke-width="1.3"/></svg></div>
<div class="t" style="left:773px;top:1226px">Others</div><div class="q" style="left:841px;top:1230px"><svg width="21" height="21"><circle cx="10.5" cy="10.5" r="10.5" fill="#dcdcdc"/><path d="M6.9 8.3C6.9 5.9 8.5 4.4 10.5 4.4C12.6 4.4 14.1 5.8 14.1 7.6C14.1 9.3 12.9 10.1 11.9 10.9C11 11.6 10.5 12.3 10.5 13.7" fill="none" stroke="#fff" stroke-width="2.5" stroke-linecap="round"/><circle cx="10.5" cy="16.6" r="1.55" fill="#fff"/></svg></div>
<div class="sl" style="left:1080px;top:1214px"><span>No</span><svg width="18" height="10" viewBox="0 0 18 10"><path d="M1 1L9 9L17 1" fill="none" stroke="#555" stroke-width="1.3"/></svg></div>

<!-- remark -->
<div class="t" style="left:52.5px;top:1295px">Remark</div>
<svg class="a" style="left:135px;top:1294px" width="25" height="28" viewBox="0 0 25 28">
 <path d="M3 23L4 16L17 3Q19 1 21 3L22 4Q24 6 22 8L9 21Z" fill="#bdbdbd"/>
 <rect x="0.5" y="25" width="19" height="2" fill="#bdbdbd"/>
</svg>

<div class="a" style="left:53px;top:1349px;width:21px;height:21px;border-radius:3px;background:#2b8ae8"></div>
<svg class="a" style="left:53px;top:1349px" width="21" height="21"><polyline points="3.9,10.9 7.7,15.5 16.2,6.6" fill="none" stroke="#fff" stroke-width="1.3"/></svg>
<div class="t" style="left:81px;top:1347px;font-size:18px;color:#999">I agree to</div>
<div class="t" style="left:164.5px;top:1347px;font-size:18px;color:#1f7fec">the Terms and Conditions of JLCPCB assembly Service.</div>

<div class="a" style="left:53px;top:1405px;width:114px;height:47px;border-radius:24px;background:#2b8ae8"></div>
<div class="t" style="left:73px;top:1417px;color:#fff;-webkit-text-stroke:0.3px #fff">Confirm</div>
</body></html>
